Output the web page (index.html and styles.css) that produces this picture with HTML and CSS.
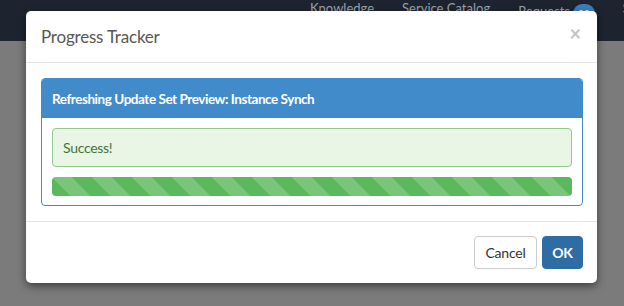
FILE: index.html
```html
<!DOCTYPE html>
<html>
<head>
<meta charset="utf-8">
<link rel="stylesheet" href="styles.css">
</head>
<body>
<div class="page">
  <nav class="topnav">
    <span class="nav-item">Knowledge</span>
    <span class="nav-item">Service Catalog</span>
    <span class="nav-item">Requests <span class="badge">38</span></span>
    <span class="nav-item">Sys</span>
  </nav>

  <div class="modal">
    <div class="modal-header">
      <h4 class="modal-title">Progress Tracker</h4>
      <span class="close">×</span>
    </div>
    <div class="modal-body">
      <div class="panel">
        <div class="panel-heading">Refreshing Update Set Preview: Instance Synch</div>
        <div class="panel-body">
          <div class="alert">Success!</div>
          <div class="progress"><div class="progress-bar" style="width:100%"></div></div>
        </div>
      </div>
    </div>
    <div class="modal-footer">
      <button class="btn btn-default">Cancel</button>
      <button class="btn btn-primary">OK</button>
    </div>
  </div>
</div>
</body>
</html>
```

FILE: styles.css
```css
* { box-sizing: border-box; }
html, body { margin: 0; padding: 0; }
body {
  width: 624px;
  height: 306px;
  overflow: hidden;
  background: #7a7b7a;
  font-family: Lato, "Open Sans", sans-serif;
}
.page { position: relative; width: 624px; height: 306px; }

.topnav {
  height: 41px;
  background: #1d2430;
  display: flex;
  align-items: flex-start;
  gap: 28px;
  padding: 0 0 0 310px;
  white-space: nowrap;
  overflow: hidden;
}
.nav-item {
  color: #9aa3ae;
  font-size: 13px;
  line-height: 17px;
  display: flex;
  align-items: center;
  gap: 3px;
}
.badge {
  display: inline-block;
  background: #3a7fc0;
  color: #dfe8f2;
  font-size: 10px;
  font-weight: bold;
  border-radius: 10px;
  padding: 0 5px;
  line-height: 19px;
  margin-top: 4px;
}

.modal {
  position: absolute;
  left: 26px;
  top: 11px;
  width: 571px;
  background: #fff;
  border-radius: 5px;
  box-shadow: 0 3px 9px rgba(0, 0, 0, 0.5);
}
.modal-header {
  height: 52px;
  border-bottom: 1px solid #e5e5e5;
  padding: 0 15px;
  display: flex;
  align-items: center;
  justify-content: space-between;
}
.modal-title {
  margin: 0;
  font-size: 17px;
  letter-spacing: -0.2px;
  font-weight: normal;
  color: #575757;
}
.close {
  color: #c4c4c4;
  font-size: 20px;
  font-weight: bold;
  line-height: 1;
  margin-top: -8px;
  margin-right: 1px;
}
.modal-body { padding: 15px 14px 15px 15px; }

.panel {
  border: 1px solid #428bca;
  border-radius: 4px;
  overflow: hidden;
}
.panel-heading {
  background: #428bca;
  color: #fff;
  font-weight: bold;
  font-size: 13.5px;
  letter-spacing: -0.45px;
  height: 39px;
  padding: 0 10px;
  display: flex;
  align-items: center;
}
.panel-body {
  padding: 10px 10px 9px;
  display: flex;
  flex-direction: column;
  gap: 10px;
}
.alert {
  height: 39px;
  background: #e9f5e5;
  border: 1px solid #8fca8b;
  border-radius: 4px;
  color: #3c763d;
  font-size: 14px;
  letter-spacing: -0.3px;
  padding: 0 10px;
  display: flex;
  align-items: center;
}
.progress {
  height: 19px;
  border-radius: 4px;
  background: #f5f5f5;
  overflow: hidden;
}
.progress-bar {
  height: 100%;
  background-color: #5cb85c;
  background-image: linear-gradient(45deg,
    rgba(255,255,255,.18) 25%, transparent 25%,
    transparent 50%, rgba(255,255,255,.18) 50%,
    rgba(255,255,255,.18) 75%, transparent 75%, transparent);
  background-size: 40px 40px;
}

.modal-footer {
  border-top: 1px solid #e5e5e5;
  padding: 14px 14px 14px;
  display: flex;
  justify-content: flex-end;
  gap: 5px;
}
.btn {
  height: 33px;
  border-radius: 4px;
  font-family: Lato, "Open Sans", sans-serif;
  font-size: 14px;
  letter-spacing: -0.2px;
  padding: 0;
  cursor: pointer;
}
.btn-default {
  background: #fff;
  border: 1px solid #ccc;
  color: #333;
  width: 63px;
}
.btn-primary {
  background: #2e6da4;
  border: 1px solid #2e6da4;
  color: #fff;
  font-weight: bold;
  width: 41px;
}
```
